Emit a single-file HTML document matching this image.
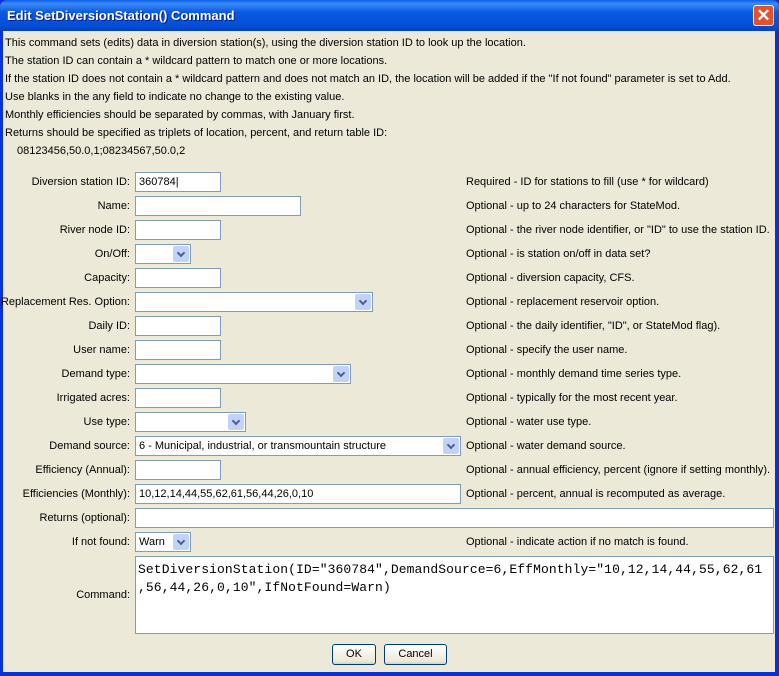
<!DOCTYPE html>
<html><head><meta charset="utf-8"><style>
*{margin:0;padding:0;box-sizing:border-box}
body{width:779px;height:676px;overflow:hidden;background:#0831d9;font-family:"Liberation Sans",sans-serif;font-size:11px;color:#000;position:relative}
#title{position:absolute;left:0;top:0;width:779px;height:31px;background:linear-gradient(#0a5fe8 0%,#3b8af8 12%,#0a5ae0 40%,#0450d8 80%,#0340c0 100%);border-radius:7px 7px 0 0}
#title span{position:absolute;left:7px;top:8px;color:#fff;font-weight:bold;font-size:13px;text-shadow:1px 1px #0a1e80}
#close{position:absolute;left:753px;top:5px;width:21px;height:21px;background:#e2512c;border:1px solid #fff;border-radius:3px;color:#fff;font-size:17px;font-weight:bold;text-align:center;line-height:19px}
#body{position:absolute;left:3px;top:31px;width:772px;height:641px;background:#ece9d8}
.t{position:absolute;left:5px;white-space:nowrap}
.l{position:absolute;right:649px;white-space:nowrap}
.d{position:absolute;left:466px;white-space:nowrap}
.f{position:absolute;height:20px;background:#fff;border:1px solid #7f9db9;padding:2px 3px;line-height:14px;white-space:nowrap}
.c::after{content:"";position:absolute;right:1px;top:1px;width:16px;height:16px;background:#c1d3fb;border-radius:2px}
.c::before{content:"";position:absolute;right:6px;top:5px;width:4px;height:4px;border-right:2px solid #4d6185;border-bottom:2px solid #4d6185;transform:rotate(45deg);z-index:1}
.b{position:absolute;top:644px;height:21px;border:1px solid #003c74;border-radius:3px;background:linear-gradient(#fff,#ece9d8 85%,#d6d0c5);text-align:center;line-height:19px}
</style></head><body>
<div id="title"><span>Edit SetDiversionStation() Command</span><div id="close">✕</div></div>
<div id="body"></div>
<div class="t" style="top:37px">This command sets (edits) data in diversion station(s), using the diversion station ID to look up the location.</div>
<div class="t" style="top:55px">The station ID can contain a * wildcard pattern to match one or more locations.</div>
<div class="t" style="top:73px">If the station ID does not contain a * wildcard pattern and does not match an ID, the location will be added if the "If not found" parameter is set to Add.</div>
<div class="t" style="top:91px">Use blanks in the any field to indicate no change to the existing value.</div>
<div class="t" style="top:109px">Monthly efficiencies should be separated by commas, with January first.</div>
<div class="t" style="top:127px">Returns should be specified as triplets of location, percent, and return table ID:</div>
<div class="t" style="top:145px;left:17px">08123456,50.0,1;08234567,50.0,2</div>

<div class="l" style="top:176px">Diversion station ID:</div><div class="f" style="left:135px;top:172px;width:86px">360784|</div><div class="d" style="top:176px">Required - ID for stations to fill (use * for wildcard)</div>
<div class="l" style="top:200px">Name:</div><div class="f" style="left:135px;top:196px;width:166px"></div><div class="d" style="top:200px">Optional - up to 24 characters for StateMod.</div>
<div class="l" style="top:224px">River node ID:</div><div class="f" style="left:135px;top:220px;width:86px"></div><div class="d" style="top:224px">Optional - the river node identifier, or "ID" to use the station ID.</div>
<div class="l" style="top:248px">On/Off:</div><div class="f c" style="left:135px;top:244px;width:56px"></div><div class="d" style="top:248px">Optional - is station on/off in data set?</div>
<div class="l" style="top:272px">Capacity:</div><div class="f" style="left:135px;top:268px;width:86px"></div><div class="d" style="top:272px">Optional - diversion capacity, CFS.</div>
<div class="l" style="top:296px">Replacement Res. Option:</div><div class="f c" style="left:135px;top:292px;width:238px"></div><div class="d" style="top:296px">Optional - replacement reservoir option.</div>
<div class="l" style="top:320px">Daily ID:</div><div class="f" style="left:135px;top:316px;width:86px"></div><div class="d" style="top:320px">Optional - the daily identifier, "ID", or StateMod flag).</div>
<div class="l" style="top:344px">User name:</div><div class="f" style="left:135px;top:340px;width:86px"></div><div class="d" style="top:344px">Optional - specify the user name.</div>
<div class="l" style="top:368px">Demand type:</div><div class="f c" style="left:135px;top:364px;width:216px"></div><div class="d" style="top:368px">Optional - monthly demand time series type.</div>
<div class="l" style="top:392px">Irrigated acres:</div><div class="f" style="left:135px;top:388px;width:86px"></div><div class="d" style="top:392px">Optional - typically for the most recent year.</div>
<div class="l" style="top:416px">Use type:</div><div class="f c" style="left:135px;top:412px;width:111px"></div><div class="d" style="top:416px">Optional - water use type.</div>
<div class="l" style="top:440px">Demand source:</div><div class="f c" style="left:135px;top:436px;width:326px">6 - Municipal, industrial, or transmountain structure</div><div class="d" style="top:440px">Optional - water demand source.</div>
<div class="l" style="top:464px">Efficiency (Annual):</div><div class="f" style="left:135px;top:460px;width:86px"></div><div class="d" style="top:464px">Optional - annual efficiency, percent (ignore if setting monthly).</div>
<div class="l" style="top:488px">Efficiencies (Monthly):</div><div class="f" style="left:135px;top:484px;width:326px">10,12,14,44,55,62,61,56,44,26,0,10</div><div class="d" style="top:488px">Optional - percent, annual is recomputed as average.</div>
<div class="l" style="top:512px">Returns (optional):</div><div class="f" style="left:135px;top:508px;width:639px"></div>
<div class="l" style="top:536px">If not found:</div><div class="f c" style="left:135px;top:532px;width:56px">Warn</div><div class="d" style="top:536px">Optional - indicate action if no match is found.</div>
<div class="l" style="top:589px">Command:</div>
<div class="f" style="left:135px;top:556px;width:639px;height:78px;font-family:'Liberation Mono',monospace;font-size:13px;letter-spacing:0.1px;line-height:18px;padding:4px 2px;overflow:hidden">SetDiversionStation(ID="360784",DemandSource=6,EffMonthly="10,12,14,44,55,62,61<br>,56,44,26,0,10",IfNotFound=Warn)</div>
<div class="b" style="left:332px;width:44px">OK</div>
<div class="b" style="left:384px;width:63px">Cancel</div>
</body></html>
